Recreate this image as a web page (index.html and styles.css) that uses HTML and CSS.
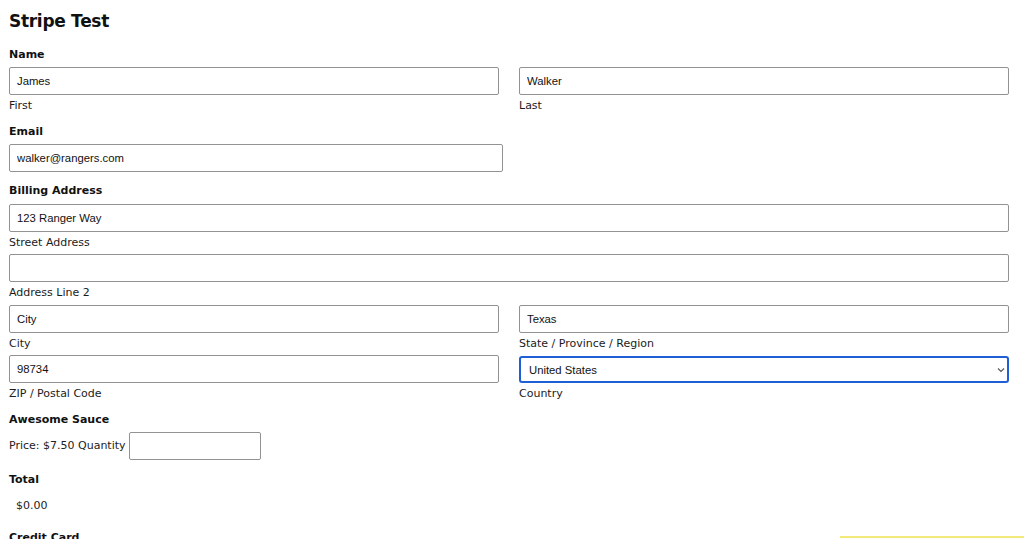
FILE: index.html
```html
<!DOCTYPE html>
<html>
<head>
<meta charset="utf-8">
<title>Stripe Test</title>
<link rel="stylesheet" href="styles.css">
</head>
<body>
<div class="page">
  <h1 class="title">Stripe Test</h1>

  <div class="label name">Name</div>
  <div class="row two">
    <div class="field">
      <input class="input" type="text" value="James">
      <div class="sub">First</div>
    </div>
    <div class="field">
      <input class="input" type="text" value="Walker">
      <div class="sub">Last</div>
    </div>
  </div>

  <div class="label email-label">Email</div>
  <div class="row">
    <input class="input email" type="text" value="walker@rangers.com">
  </div>

  <div class="label billing">Billing Address</div>
  <div class="field">
    <input class="input" type="text" value="123 Ranger Way">
    <div class="sub">Street Address</div>
  </div>
  <div class="field next">
    <input class="input" type="text" value="">
    <div class="sub">Address Line 2</div>
  </div>
  <div class="row two next wide">
    <div class="field">
      <input class="input" type="text" value="City">
      <div class="sub">City</div>
    </div>
    <div class="field">
      <input class="input" type="text" value="Texas">
      <div class="sub">State / Province / Region</div>
    </div>
  </div>
  <div class="row two next">
    <div class="field">
      <input class="input" type="text" value="98734">
      <div class="sub">ZIP / Postal Code</div>
    </div>
    <div class="field">
      <div class="select-wrap">
        <select class="select"><option>United States</option></select>
        <svg class="chev" width="8" height="6" viewBox="0 0 8 6"><path d="M1 1.5 L4 4.5 L7 1.5" fill="none" stroke="#555" stroke-width="1.1"/></svg>
      </div>
      <div class="sub">Country</div>
    </div>
  </div>

  <div class="label product">Awesome Sauce</div>
  <div class="price-row">
    <span class="plain">Price: $7.50 Quantity</span>
    <input class="input qty" type="text" value="">
  </div>

  <div class="label total">Total</div>
  <div class="amount">$0.00</div>

  <div class="label card">Credit Card</div>
</div>
<div class="popup"></div>
</body>
</html>
```

FILE: styles.css
```css
html, body {
  margin: 0;
  padding: 0;
  background: #ffffff;
}
body {
  font-family: "DejaVu Sans", Verdana, sans-serif;
  font-size: 11px;
  color: #1b1b1b;
  overflow: hidden;
  height: 539px;
}
.page {
  padding: 9px 15px 0 9px;
}
.title {
  margin: 0;
  font-size: 17px;
  letter-spacing: -0.3px;
  line-height: 24px;
  font-weight: bold;
  color: #111;
}
.label {
  font-weight: bold;
  line-height: 16px;
  color: #111;
}
.label.name { margin: 14px 0 4px; }
.label.email-label { margin: 10px 0 4px; }
.label.billing { margin: 11px 0 5px; }
.label.product { margin: 10px 0 4px; }
.label.total { margin: 12px 0 10px; }
.label.card { margin-top: 16px; }
.row.two {
  display: grid;
  grid-template-columns: 1fr 1fr;
  column-gap: 20px;
}
.next { margin-top: 3px; }
.next.wide { margin-top: 4px; }
.field { display: flex; flex-direction: column; }
.input, .select {
  box-sizing: border-box;
  height: 28px;
  width: 100%;
  border: 1px solid #929292;
  border-radius: 2px;
  padding: 0 7px;
  margin: 0;
  font-family: "Liberation Sans", Arial, sans-serif;
  font-size: 11.3px;
  color: #111;
  background: #fff;
  outline: none;
}
.input.email { width: 494px; display: block; }
.sub {
  line-height: 16px;
  margin-top: 3px;
  color: #1b1b1b;
}
.select-wrap {
  position: relative;
}
.select {
  -webkit-appearance: none;
  appearance: none;
  border: 2px solid #1f5fd6;
  border-radius: 3px;
  padding: 0 8px;
  height: 27px;
  margin-top: 1px;
}
.chev {
  position: absolute;
  right: 4px;
  top: 12px;
}
.price-row {
  display: flex;
  align-items: center;
  gap: 3px;
}
.plain { color: #222; line-height: 16px; }
.input.qty { width: 132px; }
.amount {
  padding-left: 7px;
  line-height: 16px;
  color: #222;
}
.popup {
  position: absolute;
  left: 840px;
  top: 536px;
  width: 200px;
  height: 30px;
  border-top: 2px solid #f3e97a;
  background: #fffef6;
}
```
